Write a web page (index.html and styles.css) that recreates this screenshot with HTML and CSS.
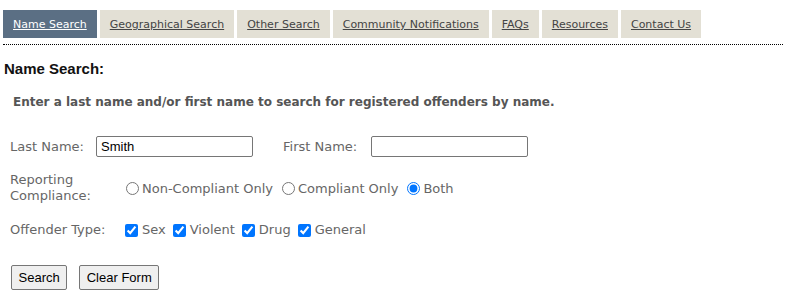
FILE: index.html
```html
<!DOCTYPE html>
<html>
<head>
<meta charset="utf-8">
<link rel="stylesheet" href="styles.css">
</head>
<body>
<div class="tabbar">
  <a class="tab active" href="#">Name Search</a>
  <a class="tab" href="#">Geographical Search</a>
  <a class="tab" href="#">Other Search</a>
  <a class="tab" href="#">Community Notifications</a>
  <a class="tab" href="#">FAQs</a>
  <a class="tab" href="#">Resources</a>
  <a class="tab" href="#">Contact Us</a>
</div>
<h2 class="title">Name Search:</h2>
<p class="intro">Enter a last name and/or first name to search for registered offenders by name.</p>
<form class="form">
  <div class="row">
    <label class="lbl lbl-last">Last Name:</label>
    <input class="txt" type="text" value="Smith">
    <label class="lbl lbl-first">First Name:</label>
    <input class="txt" type="text" value="">
  </div>
  <div class="row row-comp">
    <label class="lbl lbl-wrap">Reporting Compliance:</label>
    <span class="opts">
      <label class="opt"><input class="radio" type="radio" name="c">Non-Compliant Only</label>
      <label class="opt"><input class="radio" type="radio" name="c">Compliant Only</label>
      <label class="opt"><input class="radio" type="radio" name="c" checked>Both</label>
    </span>
  </div>
  <div class="row row-type">
    <label class="lbl lbl-type">Offender Type:</label>
    <span class="opts">
      <label class="opt"><input class="check" type="checkbox" checked>Sex</label>
      <label class="opt"><input class="check" type="checkbox" checked>Violent</label>
      <label class="opt"><input class="check" type="checkbox" checked>Drug</label>
      <label class="opt"><input class="check" type="checkbox" checked>General</label>
    </span>
  </div>
  <div class="buttons">
    <button class="btn" type="button">Search</button>
    <button class="btn" type="button">Clear Form</button>
  </div>
</form>
</body>
</html>
```
FILE: styles.css
```css
html, body { margin: 0; padding: 0; background: #fff; }
body { font-family: "DejaVu Sans", Verdana, sans-serif; color: #555; }

.tabbar {
  display: flex;
  gap: 3px;
  margin: 10px 6px 0 3px;
  padding-bottom: 6px;
  border-bottom: 1px dotted #000;
}
.tab {
  display: block;
  height: 28px;
  line-height: 30px;
  padding: 0 10px;
  background: #e3e0d5;
  color: #444;
  font-size: 11px;
  text-decoration: underline;
}
.tab.active { background: #5b6f84; color: #fff; font-weight: normal; }

.title {
  font-family: "Liberation Sans", Arial, sans-serif;
  font-size: 15px;
  font-weight: bold;
  color: #111;
  margin: 15px 0 0 4px;
}
.intro {
  font-size: 12px;
  font-weight: bold;
  color: #555;
  margin: 18px 0 0 13px;
}
.form { margin: 27px 0 0 10px; font-size: 13px; color: #666; }
.row { display: flex; align-items: center; }
.lbl-last { width: 86px; }
.lbl-first { margin-left: 30px; width: 88px; }
.txt {
  box-sizing: border-box;
  width: 157px;
  height: 21px;
  margin: 0;
  padding: 1px 4px;
  border: 1px solid #767676;
  border-radius: 2px;
  font-family: "Liberation Sans", Arial, sans-serif;
  font-size: 13px;
  color: #000;
}
.row-comp { margin-top: 15px; }
.lbl-wrap { width: 100px; line-height: 16px; }
.opts { display: flex; align-items: center; margin-left: 14px; }
.opt { display: flex; align-items: center; margin-right: 7px; }
.radio { margin: 1px 3px 0 2px; }
.check { margin: 1px 4px 0 1px; }
.row-type { margin-top: 18px; }
.lbl-type { width: 100px; margin-top: -1px; }
.row-type .opts { margin-left: 14px; }
.row-type .opt { margin-right: 6px; }

.buttons { display: flex; gap: 12px; margin-top: 28px; margin-left: 1px; }
.btn {
  height: 25px;
  padding: 0 6.5px;
  border: 1px solid #767676;
  border-radius: 2px;
  background: #efefef;
  font-family: "Liberation Sans", Arial, sans-serif;
  font-size: 13px;
  color: #000;
}
```
